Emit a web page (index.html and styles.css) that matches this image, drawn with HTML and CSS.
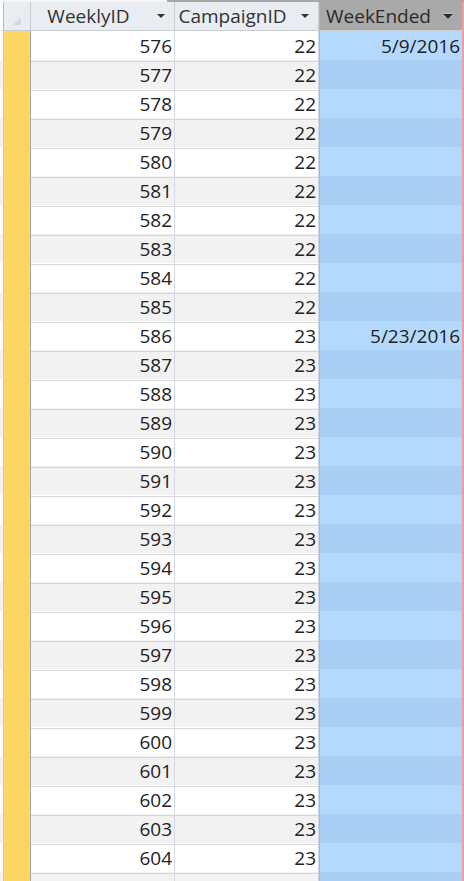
FILE: index.html
```html
<!DOCTYPE html>
<html>
<head>
<meta charset="utf-8">
<link rel="stylesheet" href="styles.css">
</head>
<body>
<div class="sheet">
  <div class="topstrip"><div class="strip-light"></div><div class="strip-dark"></div></div>
  <div class="row head">
    <div class="sel corner"><svg width="10" height="10" viewBox="0 0 10 10"><path d="M9 1 L9 9 L1 9 Z" fill="#d4d8de"/></svg></div>
    <div class="hc"><span>WeeklyID</span><i class="arr"></i></div>
    <div class="hc"><span>CampaignID</span><i class="arr"></i></div>
    <div class="hc hsel"><span>WeekEnded</span><i class="arr big"></i></div>
  </div>
  <div class="row"><div class="sel"></div><div class="c">576</div><div class="c">22</div><div class="c bl">5/9/2016</div></div>
  <div class="row alt"><div class="sel"></div><div class="c">577</div><div class="c">22</div><div class="c bl"></div></div>
  <div class="row"><div class="sel"></div><div class="c">578</div><div class="c">22</div><div class="c bl"></div></div>
  <div class="row alt"><div class="sel"></div><div class="c">579</div><div class="c">22</div><div class="c bl"></div></div>
  <div class="row"><div class="sel"></div><div class="c">580</div><div class="c">22</div><div class="c bl"></div></div>
  <div class="row alt"><div class="sel"></div><div class="c">581</div><div class="c">22</div><div class="c bl"></div></div>
  <div class="row"><div class="sel"></div><div class="c">582</div><div class="c">22</div><div class="c bl"></div></div>
  <div class="row alt"><div class="sel"></div><div class="c">583</div><div class="c">22</div><div class="c bl"></div></div>
  <div class="row"><div class="sel"></div><div class="c">584</div><div class="c">22</div><div class="c bl"></div></div>
  <div class="row alt"><div class="sel"></div><div class="c">585</div><div class="c">22</div><div class="c bl"></div></div>
  <div class="row"><div class="sel"></div><div class="c">586</div><div class="c">23</div><div class="c bl">5/23/2016</div></div>
  <div class="row alt"><div class="sel"></div><div class="c">587</div><div class="c">23</div><div class="c bl"></div></div>
  <div class="row"><div class="sel"></div><div class="c">588</div><div class="c">23</div><div class="c bl"></div></div>
  <div class="row alt"><div class="sel"></div><div class="c">589</div><div class="c">23</div><div class="c bl"></div></div>
  <div class="row"><div class="sel"></div><div class="c">590</div><div class="c">23</div><div class="c bl"></div></div>
  <div class="row alt"><div class="sel"></div><div class="c">591</div><div class="c">23</div><div class="c bl"></div></div>
  <div class="row"><div class="sel"></div><div class="c">592</div><div class="c">23</div><div class="c bl"></div></div>
  <div class="row alt"><div class="sel"></div><div class="c">593</div><div class="c">23</div><div class="c bl"></div></div>
  <div class="row"><div class="sel"></div><div class="c">594</div><div class="c">23</div><div class="c bl"></div></div>
  <div class="row alt"><div class="sel"></div><div class="c">595</div><div class="c">23</div><div class="c bl"></div></div>
  <div class="row"><div class="sel"></div><div class="c">596</div><div class="c">23</div><div class="c bl"></div></div>
  <div class="row alt"><div class="sel"></div><div class="c">597</div><div class="c">23</div><div class="c bl"></div></div>
  <div class="row"><div class="sel"></div><div class="c">598</div><div class="c">23</div><div class="c bl"></div></div>
  <div class="row alt"><div class="sel"></div><div class="c">599</div><div class="c">23</div><div class="c bl"></div></div>
  <div class="row"><div class="sel"></div><div class="c">600</div><div class="c">23</div><div class="c bl"></div></div>
  <div class="row alt"><div class="sel"></div><div class="c">601</div><div class="c">23</div><div class="c bl"></div></div>
  <div class="row"><div class="sel"></div><div class="c">602</div><div class="c">23</div><div class="c bl"></div></div>
  <div class="row alt"><div class="sel"></div><div class="c">603</div><div class="c">23</div><div class="c bl"></div></div>
  <div class="row"><div class="sel"></div><div class="c">604</div><div class="c">23</div><div class="c bl"></div></div>
  <div class="row alt"><div class="sel"></div><div class="c"></div><div class="c"></div><div class="c bl"></div></div>
</div>
</body>
</html>
```
FILE: styles.css
```css
html, body {
  margin: 0;
  padding: 0;
  background: #ffffff;
  overflow: hidden;
}
.sheet {
  width: 464px;
  height: 881px;
  overflow: hidden;
  font-family: "Open Sans", "Noto Sans", sans-serif;
  font-size: 19px;
  color: #222222;
}
.topstrip {
  display: flex;
  height: 2px;
}
.strip-light {
  width: 167px;
  background: #f4f4f4;
}
.strip-dark {
  flex: 1;
  background: #a7a7a7;
}
.row {
  display: grid;
  grid-template-columns: 31px 144px 144px 145px;
  height: 29px;
  background: #ffffff;
}
.row.alt {
  background: #f2f2f2;
}
.row > div {
  border-bottom: 1px solid #d6d6d6;
  box-sizing: border-box;
}
.sel {
  background: #fdd663;
  border-left: 3px solid #ffffff;
  border-right: 1px solid #a8a8a8;
  box-shadow: inset 1px 0 0 #c9c9c9;
}
.row.alt .sel {
  border-left-color: #f2f2f2;
}
.c {
  text-align: right;
  padding-right: 2px;
  line-height: 30px;
  border-right: 1px solid #d3d8e2;
  white-space: nowrap;
}
.c.bl {
  background: #b5d9fc;
  border-left: 1px solid #eaa0a3;
  border-right: 2px solid #eaa0a3;
  border-bottom-color: #a9cef3;
}
.row.alt .c.bl {
  background: #a9cff5;
}
.head {
  height: 29px;
  background: #e9ecf0;
}
.head > div {
  border-bottom: 1px solid #c9ccd1;
}
.corner {
  background: #e9ecf0;
  border-left: 3px solid #ffffff;
  border-right: 1px solid #c9ccd1;
  box-shadow: inset 1px 0 0 #b8b8b8;
  display: flex;
  align-items: flex-end;
  justify-content: center;
  padding-bottom: 4px;
}
.corner svg {
  display: block;
}
.hc {
  display: flex;
  align-items: center;
  padding-left: 0;
  padding-right: 9px;
  border-right: 1px solid #c9ccd1;
  font-size: 19px;
  color: #333333;
  white-space: nowrap;
}
.hc span {
  flex: 1;
  text-align: center;
  padding-right: 3px;
}
.hc.hsel {
  background: #a9a9a9;
  border-left: 1px solid #eaa0a3;
  border-right: 2px solid #eaa0a3;
  padding-right: 9px;
  color: #2b2b2b;
}
.hc.hsel span {
  padding-right: 2px;
}
.arr {
  display: block;
  width: 0;
  height: 0;
  margin-left: 8px;
  border-left: 4px solid transparent;
  border-right: 4px solid transparent;
  border-top: 4px solid #333333;
}
.arr.big {
  margin-left: 4px;
  border-left-width: 5px;
  border-right-width: 5px;
  border-top-width: 5px;
  border-top-color: #2b2b2b;
  filter: drop-shadow(0 0 1px #f0f0f0);
}
```
